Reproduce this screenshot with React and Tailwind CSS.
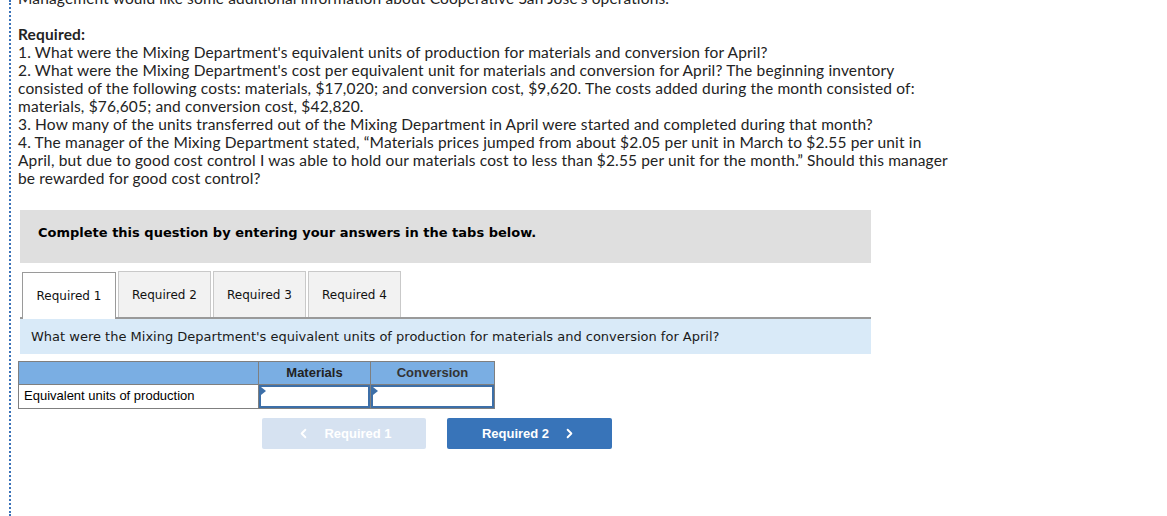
import { ChevronLeft, ChevronRight } from "lucide-react";

const lines = [
  "1. What were the Mixing Department's equivalent units of production for materials and conversion for April?",
  "2. What were the Mixing Department's cost per equivalent unit for materials and conversion for April? The beginning inventory",
  "consisted of the following costs: materials, $17,020; and conversion cost, $9,620. The costs added during the month consisted of:",
  "materials, $76,605; and conversion cost, $42,820.",
  "3. How many of the units transferred out of the Mixing Department in April were started and completed during that month?",
  "4. The manager of the Mixing Department stated, \u201cMaterials prices jumped from about $2.05 per unit in March to $2.55 per unit in",
  "April, but due to good cost control I was able to hold our materials cost to less than $2.55 per unit for the month.\u201d Should this manager",
  "be rewarded for good cost control?",
];

const tabs = ["Required 1", "Required 2", "Required 3", "Required 4"];

const InputCell = () => (
  <td className="border border-[#7f7f7f] p-0 h-[23px]">
    <div className="relative h-[23px] border-2 border-[#3d6fa8] bg-white">
      <span className="absolute left-0 top-0 w-0 h-0 border-t-[4px] border-b-[4px] border-l-[5px] border-t-transparent border-b-transparent border-l-[#3d6fa8]" />
    </div>
  </td>
);

const App = () => {
  return (
    <div className="min-h-[516px] ml-[9px] border-l-2 border-dotted border-[#3a72b8] pl-[7px] bg-white overflow-hidden">
      <div
        className="text-[15.5px] leading-[18px] tracking-[0.15px] text-[#232323] mt-[-11px]"
        style={{ fontFamily: "Lato, 'Open Sans', sans-serif" }}
      >
        <div className="whitespace-nowrap">
          Management would like some additional information about Cooperative San Jose's operations.
        </div>
        <div className="h-[18px]" />
        <div className="font-bold">Required:</div>
        {lines.map((l, i) => (
          <div key={i} className="whitespace-nowrap">
            {l}
          </div>
        ))}
      </div>

      <div
        className="ml-[2px] w-[851px] mt-[23px]"
        style={{ fontFamily: "'DejaVu Sans', Verdana, sans-serif" }}
      >
        <div className="h-[53px] bg-[#dfdfdf] pl-[18px] pt-[15px] leading-[16px] text-[13px] font-bold text-black">
          Complete this question by entering your answers in the tabs below.
        </div>

        <div className="mt-[8px] flex items-end gap-[2px] pl-[2px] border-b-2 border-[#9a9a9a]">
          {tabs.map((t, i) => (
            <div
              key={t}
              className={
                i === 0
                  ? "w-[94px] h-[47px] mb-[-2px] flex items-center justify-center bg-white border border-b-0 border-[#9a9a9a] text-[12px] text-[#111]"
                  : "w-[93px] h-[46px] flex items-center justify-center bg-[#f2f2f2] border border-b-0 border-[#c9c9c9] text-[12px] text-[#111]"
              }
            >
              {t}
            </div>
          ))}
        </div>

        <div className="h-[35px] bg-[#d9eaf8] flex items-center pl-[11px] text-[13px] text-[#1a1a1a]">
          What were the Mixing Department's equivalent units of production for materials and conversion for April?
        </div>
      </div>

      <div style={{ fontFamily: "'Liberation Sans', Arial, sans-serif" }}>
        <table className="mt-[7px] border-collapse border border-[#7f7f7f] text-[13px]">
          <thead>
            <tr className="bg-[#7aaee3] h-[23px]">
              <th className="w-[240px] border border-[#7f7f7f]" />
              <th className="w-[112px] border border-[#7f7f7f] font-bold text-[#222] text-center">Materials</th>
              <th className="w-[124px] border border-[#7f7f7f] font-bold text-[#333] text-center">Conversion</th>
            </tr>
          </thead>
          <tbody>
            <tr className="h-[23px]">
              <td className="border border-[#7f7f7f] pl-[5px] pb-[1px] text-black">Equivalent units of production</td>
              <InputCell />
              <InputCell />
            </tr>
          </tbody>
        </table>

        <div className="mt-[9px] ml-[244px] flex gap-[21px]">
          <div className="w-[164px] h-[31px] rounded-[2px] bg-[#d6e2f1] flex items-center justify-center gap-[13px] text-white font-bold text-[13px]">
            <ChevronLeft size={15} strokeWidth={3} />
            <span>Required 1</span>
          </div>
          <div className="w-[165px] h-[31px] rounded-[2px] bg-[#3874b9] flex items-center justify-center gap-[13px] text-white font-bold text-[13px]">
            <span>Required 2</span>
            <ChevronRight size={15} strokeWidth={3} />
          </div>
        </div>
      </div>
    </div>
  );
};

export default App;
